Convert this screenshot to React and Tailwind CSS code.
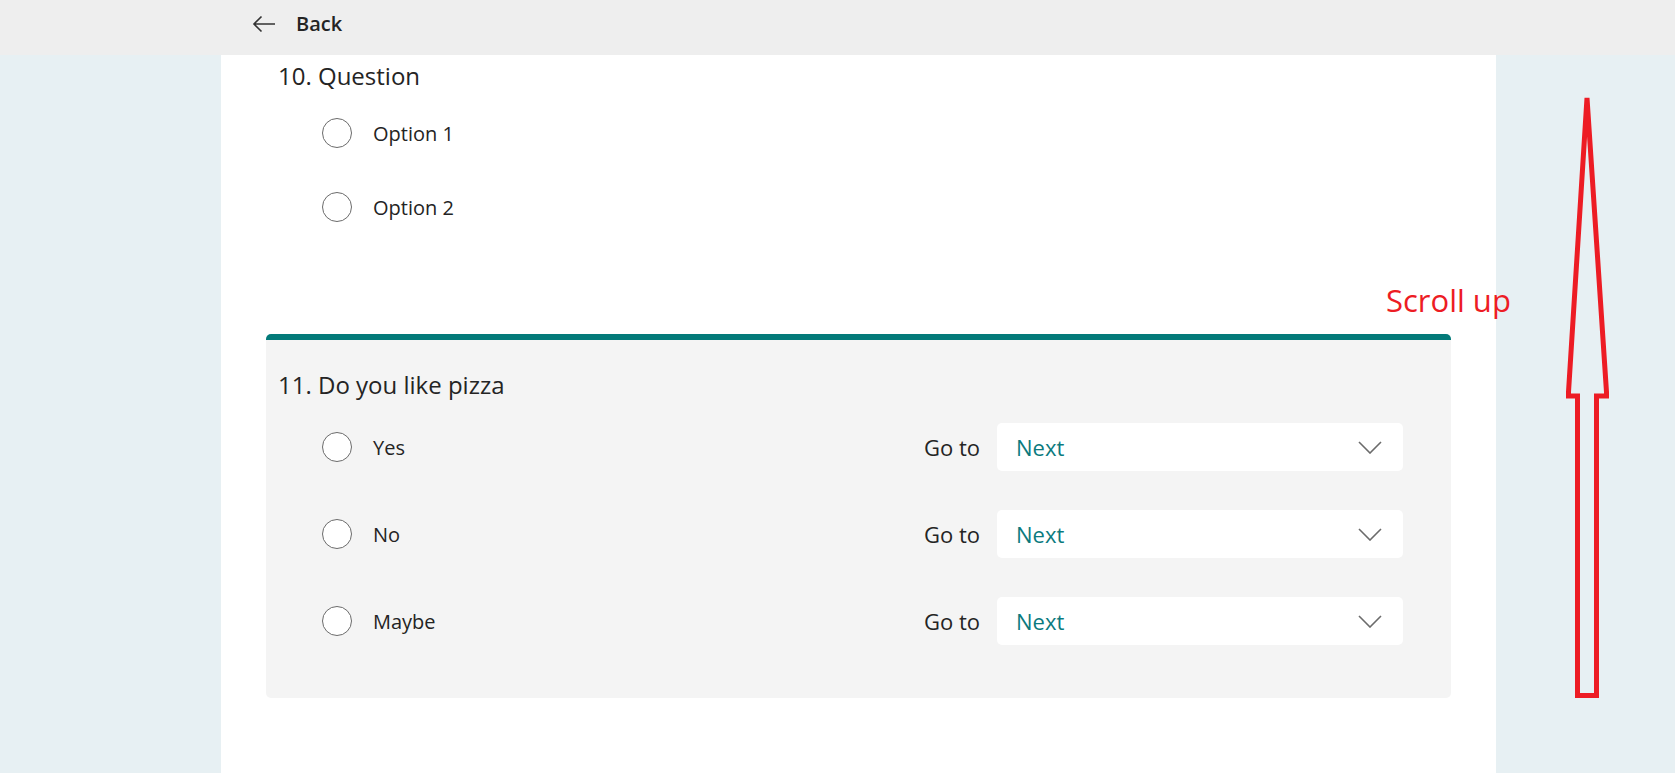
import React from "react";

function Radio() {
  return (
    <span className="block w-[30px] h-[30px] shrink-0 rounded-full border-[1.5px] border-[#6b6b6b] bg-white" />
  );
}

function Chevron() {
  return (
    <svg width="24" height="13" viewBox="0 0 24 13" className="shrink-0">
      <path d="M1 1 L12 12 L23 1" fill="none" stroke="#6b6b6b" strokeWidth="1.6" />
    </svg>
  );
}

function BranchRow({ label }) {
  return (
    <div className="flex items-center h-[48px]">
      <div className="flex items-center w-[658px] pl-[56px]">
        <Radio />
        <span className="ml-[21px] pt-[2px] text-[20px] text-[#242424]">{label}</span>
      </div>
      <span className="text-[22px] text-[#242424] w-[73px]">Go to</span>
      <div className="flex items-center justify-between w-[406px] h-[48px] bg-white rounded-[5px] pl-[19px] pr-[21px]">
        <span className="text-[22px] text-[#0b7a7e]">Next</span>
        <Chevron />
      </div>
    </div>
  );
}

function OptionRow({ label }) {
  return (
    <div className="flex items-center h-[30px] pl-[56px]">
      <Radio />
      <span className="ml-[21px] pt-[2px] text-[20px] text-[#242424]">{label}</span>
    </div>
  );
}

export default function App() {
  return (
    <div className="relative min-h-[773px] bg-[#e7f0f3] font-['Open_Sans',sans-serif] overflow-hidden">
      <header className="h-[55px] bg-[#eeeeee] flex items-start pt-[9px] pl-[252px]">
        <div className="flex items-center h-[30px] gap-[20px]">
          <svg width="24" height="18" viewBox="0 0 24 18">
            <path d="M23 9 H2 M9.5 1.5 L2 9 L9.5 16.5" fill="none" stroke="#333" strokeWidth="1.6" />
          </svg>
          <span className="text-[20px] font-semibold text-[#242424]">Back</span>
        </div>
      </header>

      <main className="ml-[221px] w-[1275px] min-h-[718px] bg-white px-[45px]">
        <section className="pt-[6px]">
          <h2 className="pl-[12px] h-[30px] leading-[30px] text-[24px] text-[#242424]">10. Question</h2>
          <div className="mt-[27px] flex flex-col gap-[44px]">
            <OptionRow label="Option 1" />
            <OptionRow label="Option 2" />
          </div>
        </section>

        <section className="mt-[112px] rounded-[5px] bg-[#f4f4f4] border-t-[6px] border-[#037a79] pb-[53px]">
          <h2 className="pt-[30px] pl-[12px] h-[59px] leading-[30px] text-[24px] text-[#242424]">11. Do you like pizza</h2>
          <div className="mt-[24px] flex flex-col gap-[39px]">
            <BranchRow label="Yes" />
            <BranchRow label="No" />
            <BranchRow label="Maybe" />
          </div>
        </section>
      </main>

      <span className="absolute left-[1386px] top-[285px] text-[31px] leading-none text-[#ed1c24]">Scroll up</span>
      <svg className="absolute left-[1550px] top-[90px]" width="70" height="620" viewBox="1550 90 70 620">
        <polygon
          points="1587,98 1568.5,392 1568.5,396 1577.5,396 1577.5,695.5 1596.5,695.5 1596.5,396 1606.5,396 1606.5,392"
          fill="none"
          stroke="#ed1c24"
          strokeWidth="5"
          strokeLinejoin="miter"
        />
      </svg>
    </div>
  );
}
